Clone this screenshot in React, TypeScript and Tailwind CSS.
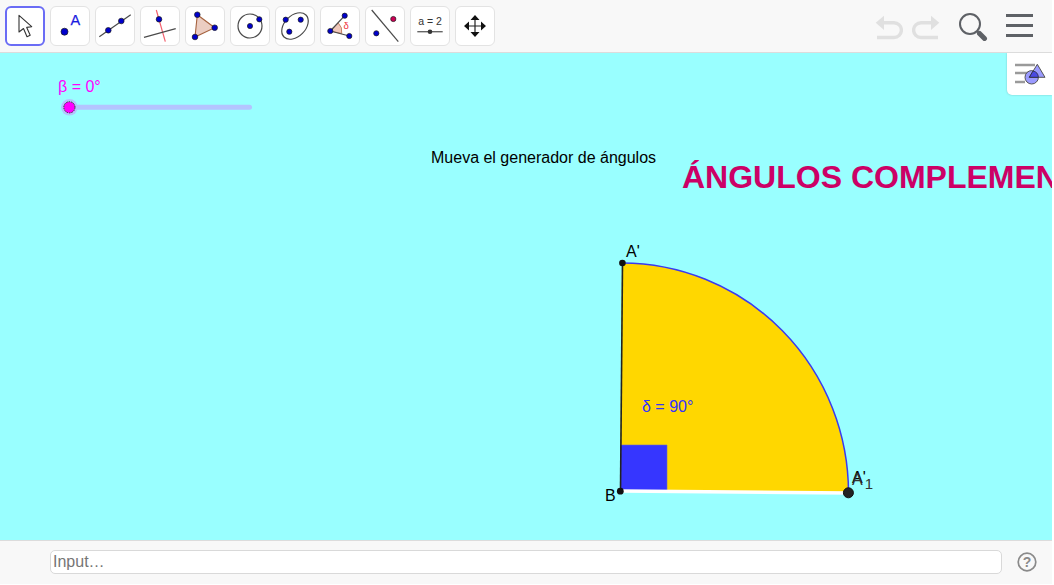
import React from "react";

const B = "#0000cc";

function Btn({ active, children }: { active?: boolean; children: React.ReactNode }) {
  return (
    <div className={active
      ? "w-10 h-10 rounded-[6px] border-2 border-[#6a6cf5] bg-white shrink-0"
      : "w-10 h-10 rounded-[6px] border border-[#e3e3e3] bg-white shrink-0"}>
      <svg viewBox="0 0 40 40" className={active ? "w-10 h-10 -m-[2px] block" : "w-10 h-10 -m-px block"}>{children}</svg>
    </div>
  );
}

const Dot = ({ x, y, r = 2.8, fill = B }: { x: number; y: number; r?: number; fill?: string }) => (
  <circle cx={x} cy={y} r={r} fill={fill} stroke="#1a1a1a" strokeWidth="0.7" />
);

const L = "#4a4a4a";

export default function App() {
  return (
    <div className="w-[1054px] h-[585px] bg-white flex flex-col overflow-hidden font-['Liberation_Sans',Arial,sans-serif]">
      <div className="w-[1052px] h-[53px] shrink-0 bg-[#f8f8f8] border-b border-[#dcdcdc] flex items-center pl-[5px] pr-[19px] gap-[5px] pb-[1px]">
        <Btn active>
          <path d="M14 9.3 L14 26 L18.5 22.5 L22 30.7 L25.2 29.2 L21.7 21.4 L26.7 20.7 Z" fill="#fff" stroke="#333" strokeWidth="1.1" strokeLinejoin="round" />
        </Btn>
        <Btn>
          <Dot x={14.5} y={25.7} r={3.5} />
          <text x={20.4} y={19} fontSize="14.5" fill="#1a1ae0" stroke="#1a1ae0" strokeWidth="0.25" fontFamily="Liberation Sans, sans-serif">A</text>
        </Btn>
        <Btn>
          <line x1="4.3" y1="30.7" x2="35.7" y2="8.7" stroke={L} strokeWidth="1.2" />
          <Dot x={13.3} y={24.3} />
          <Dot x={26.3} y={15} />
        </Btn>
        <Btn>
          <line x1="16.3" y1="4" x2="25.3" y2="35.7" stroke="#f2606e" strokeWidth="1.2" />
          <line x1="4" y1="31.3" x2="35.7" y2="22.7" stroke={L} strokeWidth="1.2" />
          <Dot x={19} y={13.3} />
        </Btn>
        <Btn>
          <polygon points="12.3,8.7 29.7,21.7 10,31" fill="#ebcdc2" stroke="#a5623f" strokeWidth="1.1" />
          <Dot x={12.3} y={8.7} />
          <Dot x={29.7} y={21.7} />
          <Dot x={10} y={31} />
        </Btn>
        <Btn>
          <circle cx="20" cy="20" r="12" fill="none" stroke={L} strokeWidth="1.2" />
          <Dot x={20} y={20} r={2.6} />
          <Dot x={29.3} y={13.3} r={2.6} />
        </Btn>
        <Btn>
          <ellipse cx="20" cy="20" rx="15.5" ry="10.5" transform="rotate(-45 20 20)" fill="none" stroke={L} strokeWidth="1.2" />
          <Dot x={10.7} y={13.7} r={2.6} />
          <Dot x={25.7} y={13.7} r={2.6} />
          <Dot x={14.3} y={25.7} r={2.6} />
        </Btn>
        <Btn>
          <path d="M10.3 25 L18.3 17 A12 12 0 0 1 21.7 27.5 Z" fill="#f0c8bb" stroke="#c07a5a" strokeWidth="0.9" />
          <line x1="10.3" y1="25" x2="24.7" y2="9.7" stroke={L} strokeWidth="1.2" />
          <line x1="10.3" y1="25" x2="29.3" y2="30" stroke={L} strokeWidth="1.2" />
          <Dot x={10.3} y={25} r={2.6} />
          <Dot x={24.7} y={9.7} r={2.6} />
          <Dot x={29.3} y={30} r={2.6} />
          <text x={23.5} y={23} fontSize="9.5" fill="#f0303a" fontFamily="Liberation Sans, sans-serif">δ</text>
        </Btn>
        <Btn>
          <line x1="6.7" y1="4" x2="33.3" y2="35.7" stroke={L} strokeWidth="1.2" />
          <Dot x={11.3} y={27.3} r={2.6} />
          <Dot x={28.3} y={13} r={2.6} fill="#cc0055" />
        </Btn>
        <Btn>
          <text x={20} y={18.7} fontSize="10.5" textAnchor="middle" fill="#333" fontFamily="Liberation Sans, sans-serif">a = 2</text>
          <line x1="7.3" y1="25.7" x2="32.7" y2="25.7" stroke="#666" strokeWidth="1.4" />
          <circle cx="20" cy="25.7" r="2.3" fill="#333" />
        </Btn>
        <Btn>
          <path d="M20 12 V28 M12 20 H28" stroke="#222" strokeWidth="1.2" />
          <path d="M20 9 L24.5 14 H15.5 Z M20 31 L24.5 26 H15.5 Z M9 20 L14 15.5 V24.5 Z M31 20 L26 15.5 V24.5 Z" fill="#111" />
        </Btn>
        <div className="flex-1" />
        <svg viewBox="0 0 28 28" className="w-7 h-7 mr-[4px]">
          <path d="M8 10.7 H19 A7.4 7.4 0 0 1 19 25.5 H2" fill="none" stroke="#e0e0e0" strokeWidth="3.4" />
          <path d="M0.7 10.7 L9 3.7 V18 Z" fill="#e0e0e0" />
        </svg>
        <svg viewBox="0 0 28 28" className="w-7 h-7 mr-[13px]">
          <path d="M20 10.7 H9 A7.4 7.4 0 0 0 9 25.5 H26" fill="none" stroke="#e0e0e0" strokeWidth="3.4" />
          <path d="M27.3 10.7 L19 3.7 V18 Z" fill="#e0e0e0" />
        </svg>
        <svg viewBox="0 0 30 30" className="w-[30px] h-[30px] mr-[13px]">
          <circle cx="12" cy="13" r="10" fill="none" stroke="#5e6166" strokeWidth="2" />
          <line x1="19" y1="20" x2="21" y2="22" stroke="#5e6166" strokeWidth="2" />
          <line x1="21.5" y1="22.5" x2="26.5" y2="27.5" stroke="#5e6166" strokeWidth="5" strokeLinecap="round" />
        </svg>
        <div className="flex flex-col gap-[7px] w-[27px]">
          <div className="h-[3px] bg-[#5e6166]" />
          <div className="h-[3px] bg-[#5e6166]" />
          <div className="h-[3px] bg-[#5e6166]" />
        </div>
      </div>

      <div className="relative w-[1052px] h-[487px] shrink-0 bg-[#99ffff] overflow-hidden">
        <svg className="absolute left-0 top-0" width="1052" height="487" viewBox="0 53 1052 487">
          <path d="M620 491 L622 263 A227 230 0 0 1 848.5 493 Z" fill="#ffd700" />
          <path d="M622 263 A227 230 0 0 1 848.5 493" fill="none" stroke="#3a3af0" strokeWidth="1.5" />
          <polygon points="620.5,445 667,445 667,490.5 620.5,490" fill="#3636ff" stroke="#6a6acc" strokeWidth="0.6" />
          <line x1="620.5" y1="491" x2="622.5" y2="263" stroke="#222" strokeWidth="1.6" />
          <line x1="620.5" y1="491" x2="848.5" y2="493" stroke="#fff" strokeWidth="3.5" />
          <circle cx="620.3" cy="491.2" r="3.4" fill="#111" />
          <circle cx="622.4" cy="263" r="3.3" fill="#111" />
          <circle cx="848.4" cy="492.8" r="5" fill="#222" stroke="#111" />
          <line x1="72" y1="107.3" x2="249.5" y2="107.3" stroke="#b4c4ff" strokeWidth="5" strokeLinecap="round" />
          <circle cx="69.4" cy="107.3" r="8.3" fill="#b4c4ff" />
          <circle cx="69.4" cy="107.3" r="5.6" fill="#ff00ff" stroke="#333" strokeWidth="1" strokeDasharray="1.5 1" />
        </svg>

        <div className="absolute right-0 top-0 w-[45px] h-[42px] bg-white rounded-bl-[5px] shadow-[0_0_2px_rgba(0,0,0,0.25)]">
          <svg viewBox="0 0 45 42" className="w-[45px] h-[42px]">
            <path d="M8 12 H28 M8 20 H21 M8 29 H18" stroke="#9a9a9a" strokeWidth="2.4" />
            <circle cx="24.7" cy="24.3" r="6.7" fill="#9a9aff" stroke="#555" strokeWidth="1" />
            <polygon points="30.3,11.3 38,24.3 22.3,24.3" fill="#9a9aff" stroke="#555" strokeWidth="1" />
            <path d="M22.3 24.3 L26 18 A6.7 6.7 0 0 1 31.4 24.3 Z" fill="#4a4ae0" stroke="#222" strokeWidth="0.7" />
          </svg>
        </div>

        <span className="absolute left-[58px] top-[25px] text-[16px] leading-[18px] text-[#ff00ff]">β = 0°</span>
        <span className="absolute left-[431px] top-[96px] text-[16px] leading-[18px] text-black">Mueva el generador de ángulos</span>
        <span className="absolute left-[682px] top-[106px] text-[32px] leading-[37px] font-bold text-[#cc0066] whitespace-nowrap">ÁNGULOS COMPLEMENTARIOS</span>
        <span className="absolute left-[626px] top-[190px] text-[16px] leading-[18px] text-black">A'</span>
        <span className="absolute left-[642px] top-[345px] text-[16px] leading-[18px] text-[#3333ff]">δ = 90°</span>
        <span className="absolute left-[605px] top-[434px] text-[16px] leading-[18px] text-black">B</span>
        <span className="absolute left-[852px] top-[416px] text-[16px] leading-[18px] text-black">A'</span>
        <span className="absolute left-[852px] top-[418px] text-[16px] leading-[18px] text-[#333]">A<sub className="bottom-0 ml-[2px] text-[15px] leading-[0] align-[-4px]">1</sub></span>
      </div>

      <div className="w-[1052px] h-[44px] shrink-0 bg-[#f8f8f8] border-t border-[#dcdcdc] flex items-center pl-[50px] pb-[2px]">
        <div className="w-[952px] h-6 rounded-[5px] border border-[#d9d9d9] bg-white pl-[2px] text-[16px] leading-[22px] text-[#757575]">Input…</div>
        <svg viewBox="0 0 20 20" className="w-5 h-5 ml-[15px]">
          <circle cx="10" cy="10" r="8.8" fill="none" stroke="#8a8a8a" strokeWidth="1.7" />
          <text x="10" y="15" fontSize="14" fontWeight="bold" textAnchor="middle" fill="#8a8a8a" fontFamily="Liberation Sans, sans-serif">?</text>
        </svg>
      </div>
    </div>
  );
}
